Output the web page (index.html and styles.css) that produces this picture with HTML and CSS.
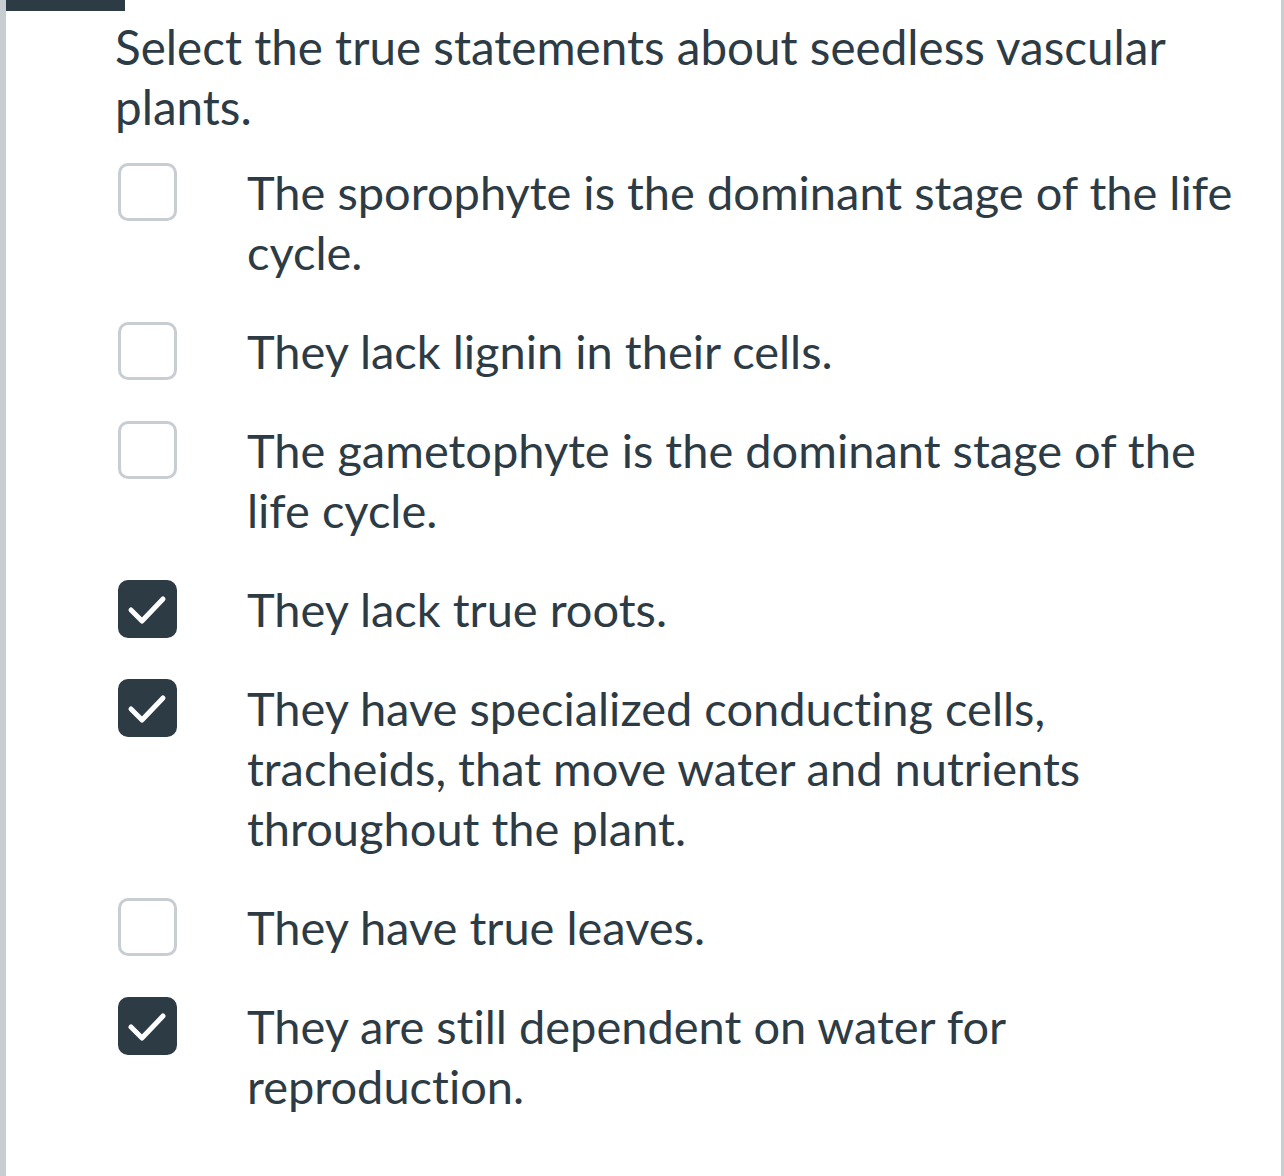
FILE: index.html
```html
<!DOCTYPE html>
<html lang="en">
<head>
  <meta charset="UTF-8">
  <meta name="viewport" content="width=device-width, initial-scale=1.0">
  <title>Question</title>
  <link rel="stylesheet" href="styles.css">
</head>
<body>

  <div class="page">
    <div class="tab"></div>

    <section class="question">
      <p class="question-text">Select the true statements about seedless vascular plants.</p>

      <ul class="answers">
        <li class="answer">
          <span class="box"></span>
          <span class="label">The sporophyte is the dominant stage of the life cycle.</span>
        </li>
        <li class="answer">
          <span class="box"></span>
          <span class="label">They lack lignin in their cells.</span>
        </li>
        <li class="answer">
          <span class="box"></span>
          <span class="label">The gametophyte is the dominant stage of the life cycle.</span>
        </li>
        <li class="answer">
          <span class="box checked">
            <svg viewBox="0 0 58 58"><path d="M13 30 L24 41 L45 19"/></svg>
          </span>
          <span class="label">They lack true roots.</span>
        </li>
        <li class="answer">
          <span class="box checked">
            <svg viewBox="0 0 58 58"><path d="M13 30 L24 41 L45 19"/></svg>
          </span>
          <span class="label">They have specialized conducting cells, tracheids, that move water and nutrients throughout the plant.</span>
        </li>
        <li class="answer">
          <span class="box"></span>
          <span class="label">They have true leaves.</span>
        </li>
        <li class="answer">
          <span class="box checked">
            <svg viewBox="0 0 58 58"><path d="M13 30 L24 41 L45 19"/></svg>
          </span>
          <span class="label">They are still dependent on water for reproduction.</span>
        </li>
      </ul>
    </section>
  </div>

</body>
</html>
```

FILE: styles.css
```css
body {
  margin: 0;
  padding: 0;
  font-family: Lato, "Open Sans", sans-serif;
  font-variant-ligatures: no-common-ligatures;
  color: #2d3b45;
  background: #fff;
}

.page {
  min-height: 100vh;
  box-sizing: border-box;
  border-left: 6px solid #c7cdd1;
  border-right: 3px solid #c7cdd1;
}

.tab {
  width: 119px;
  height: 11px;
  background-color: #2d3b45;
}

.question {
  padding: 6px 26px 0 109px;
}

.question-text {
  margin: 0 0 25px;
  font-size: 47.6px;
  line-height: 60px;
}

.answers {
  list-style: none;
  margin: 0;
  padding: 0;
}

.answer {
  display: flex;
  align-items: flex-start;
  margin-bottom: 39px;
}

.box {
  flex: none;
  width: 59px;
  height: 58px;
  margin-top: 1px;
  margin-left: 3px;
  margin-right: 70px;
  box-sizing: border-box;
  border: 3px solid #c7cdd1;
  border-radius: 10px;
  background: #fff;
}

.box.checked {
  background-color: #2d3b45;
  border-color: #2d3b45;
}

.box svg {
  display: block;
  width: 58px;
  height: 58px;
  margin: -3px;
}

.box svg path {
  fill: none;
  stroke: #fff;
  stroke-width: 5;
  stroke-linecap: round;
  stroke-linejoin: round;
}

.label {
  font-size: 47px;
  line-height: 60px;
}
```
